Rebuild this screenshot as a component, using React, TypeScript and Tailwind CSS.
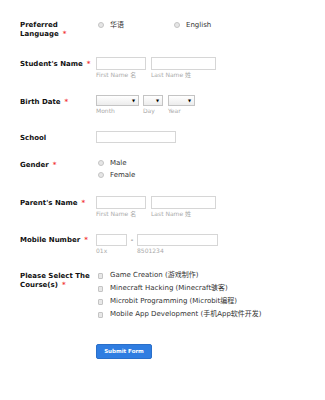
import React from "react";

const font = { fontFamily: '"DejaVu Sans", Verdana, "Noto Sans CJK SC", sans-serif' };

function Star() {
  return <span className="ml-[4px] text-[#f23a3a]">*</span>;
}

function Radio({ label }: { label: string }) {
  return (
    <div className="flex items-center h-[12px]">
      <span className="ml-[2px] w-[6px] h-[6px] rounded-full border border-[#c4c4c4] bg-[#e6e6e6] shrink-0" />
      <span className="ml-[6px] text-[7px] text-[#333]">{label}</span>
    </div>
  );
}

function Check({ label }: { label: string }) {
  return (
    <div className="flex items-center h-[13px]">
      <span className="w-[5px] h-[6px] rounded-[1px] border border-[#c4c4c4] bg-[#e8e8e8] shrink-0 ml-[2px]" />
      <span className="ml-[7px] text-[7px] text-[#333]">{label}</span>
    </div>
  );
}

function Input({ w, h }: { w: string; h: string }) {
  return <div className={`${w} ${h} border border-[#d6d6d6] bg-white`} />;
}

function Sub({ children }: { children: React.ReactNode }) {
  return <div className="text-[6px] leading-[7px] text-[#aaa] mt-[1px]">{children}</div>;
}

function Select({ w }: { w: string }) {
  return (
    <div
      className={`${w} h-[11px] border border-[#c4c4c4] bg-gradient-to-b from-white to-[#ececec] flex items-center justify-end pr-[3px]`}
    >
      <span className="text-[4px] leading-none text-black">▼</span>
    </div>
  );
}

const lbl = "w-[76px] shrink-0 text-[7px] leading-[8.5px] font-bold text-[#111]";

export default function App() {
  return (
    <div className="w-[325px] h-[400px] bg-white pl-[20px] pt-[20px]" style={font}>
      {/* Preferred Language */}
      <div className="flex h-[37px]">
        <div className={`${lbl} pt-[1px]`}>
          Preferred
          <br />
          Language
          <Star />
        </div>
        <div className="flex -mt-[1px]">
          <div className="w-[76px]">
            <Radio label="华语" />
          </div>
          <Radio label="English" />
        </div>
      </div>

      {/* Student's Name */}
      <div className="flex h-[38px]">
        <div className={`${lbl} pt-[3px]`}>
          Student's Name
          <Star />
        </div>
        <div className="flex gap-[5px]">
          <div>
            <Input w="w-[50px]" h="h-[13px]" />
            <Sub>First Name 名</Sub>
          </div>
          <div>
            <Input w="w-[65px]" h="h-[13px]" />
            <Sub>Last Name 姓</Sub>
          </div>
        </div>
      </div>

      {/* Birth Date */}
      <div className="flex h-[36px]">
        <div className={`${lbl} pt-[3px]`}>
          Birth Date
          <Star />
        </div>
        <div className="flex">
          <div className="mr-[4px]">
            <Select w="w-[43px]" />
            <Sub>Month</Sub>
          </div>
          <div className="mr-[5px]">
            <Select w="w-[20px]" />
            <Sub>Day</Sub>
          </div>
          <div>
            <Select w="w-[27px]" />
            <Sub>Year</Sub>
          </div>
        </div>
      </div>

      {/* School */}
      <div className="flex h-[26px]">
        <div className={`${lbl} pt-[3px]`}>School</div>
        <Input w="w-[80px]" h="h-[12px]" />
      </div>

      {/* Gender */}
      <div className="flex h-[39px]">
        <div className={`${lbl} pt-[4px]`}>
          Gender
          <Star />
        </div>
        <div>
          <Radio label="Male" />
          <Radio label="Female" />
        </div>
      </div>

      {/* Parent's Name */}
      <div className="flex h-[38px]">
        <div className={`${lbl} pt-[3px]`}>
          Parent's Name
          <Star />
        </div>
        <div className="flex gap-[5px]">
          <div>
            <Input w="w-[50px]" h="h-[13px]" />
            <Sub>First Name 名</Sub>
          </div>
          <div>
            <Input w="w-[65px]" h="h-[13px]" />
            <Sub>Last Name 姓</Sub>
          </div>
        </div>
      </div>

      {/* Mobile Number */}
      <div className="flex h-[35px]">
        <div className={`${lbl} pt-[2px]`}>
          Mobile Number
          <Star />
        </div>
        <div className="flex">
          <div>
            <Input w="w-[31px]" h="h-[12px]" />
            <Sub>01x</Sub>
          </div>
          <div className="w-[10px] text-center text-[7px] leading-[12px] text-[#333]">-</div>
          <div>
            <Input w="w-[81px]" h="h-[12px]" />
            <Sub>8501234</Sub>
          </div>
        </div>
      </div>

      {/* Courses */}
      <div className="flex h-[75px]">
        <div className={`${lbl} pt-[3px]`}>
          Please Select The
          <br />
          Course(s)
          <Star />
        </div>
        <div>
          <Check label="Game Creation (游戏制作)" />
          <Check label="Minecraft Hacking (Minecraft骇客)" />
          <Check label="Microbit Programming (Microbit编程)" />
          <Check label="Mobile App Development (手机App软件开发)" />
        </div>
      </div>

      {/* Submit */}
      <div className="flex">
        <div className="w-[76px] shrink-0" />
        <button className="w-[56px] h-[15px] rounded-[2px] bg-[#2f7de1] border border-[#2a6fc9] text-white text-[5.5px] font-bold leading-none">
          Submit Form
        </button>
      </div>
    </div>
  );
}
